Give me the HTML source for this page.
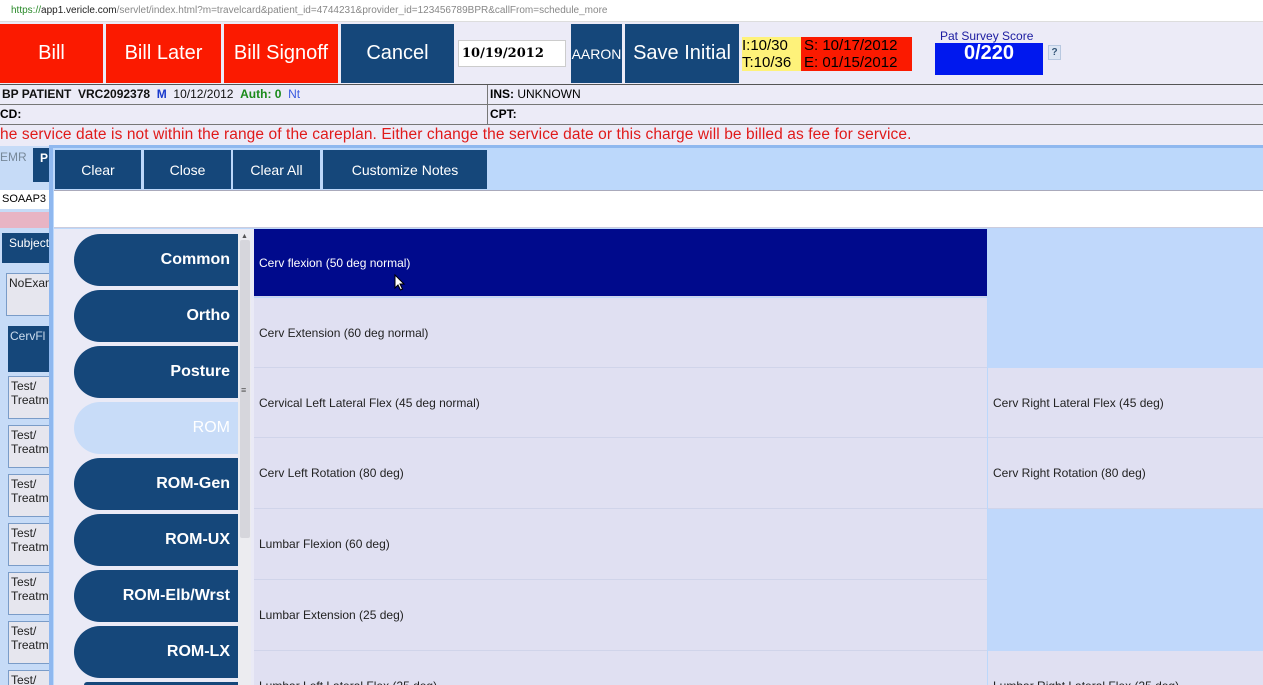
<!DOCTYPE html>
<html style="width:1263px;height:685px;overflow:hidden"><head><meta charset="utf-8"><style>
*{margin:0;padding:0;box-sizing:border-box}
body{width:1263px;height:685px;overflow:hidden;background:#ecebf7;font-family:"Liberation Sans",Arial,sans-serif;position:relative}
.a{position:absolute}
.btn{position:absolute;top:24px;height:59px;color:#fff;font-size:20px;display:flex;align-items:center;justify-content:center}
.red{background:#fb1a00}
.nav{background:#15477a}
.tb{position:absolute;top:150px;height:39px;background:#15477a;color:#fff;font-size:14px;display:flex;align-items:center;justify-content:center}
.pill{position:absolute;left:74px;width:164px;height:52px;background:#15477a;color:#fff;border-radius:26px 0 0 26px;font-size:16px;font-weight:bold;display:flex;align-items:center;justify-content:flex-end;padding-right:8px}
.cell{position:absolute;font-size:12px;color:#222;display:flex;align-items:center;padding-left:5px;background:#e0e0f2;border-bottom:1px solid #d0d4ea;overflow:hidden}
.lb{position:absolute;background:#e6e6ee;border:1px solid #7a9cc8;font-size:12px;color:#222;line-height:14px;padding:2px;overflow:hidden;white-space:nowrap}
.ln{position:absolute;left:0;width:1263px;height:1px;background:#555}
</style></head><body>
<div class="a" style="left:0;top:0;width:1263px;height:22px;background:#fff;border-bottom:1px solid #ddd;font-size:10px;line-height:22px;padding-left:11px;color:#888"><span style="color:#2a8a2a">https://</span><span style="color:#222">app1.vericle.com</span>/servlet/index.html?m=travelcard&amp;patient_id=4744231&amp;provider_id=123456789BPR&amp;callFrom=schedule_more</div>
<div class="btn red" style="left:0;width:103px">Bill</div>
<div class="btn red" style="left:106px;width:115px">Bill Later</div>
<div class="btn red" style="left:224px;width:114px">Bill Signoff</div>
<div class="btn nav" style="left:341px;width:113px">Cancel</div>
<div class="a" style="left:458px;top:40px;width:108px;height:27px;background:#fff;border:1px solid #ccc;font-family:'DejaVu Serif',serif;font-weight:bold;font-size:13px;line-height:25px;padding-left:3px">10/19/2012</div>
<div class="btn nav" style="left:571px;width:51px;font-size:14px">AARON</div>
<div class="btn nav" style="left:625px;width:114px">Save Initial</div>
<div class="a" style="left:742px;top:37px;width:59px;height:34px;background:#fef27a;font-size:15px;line-height:17px">I:10/30<br>T:10/36</div>
<div class="a" style="left:801px;top:37px;width:111px;height:34px;background:#fb1a00;font-size:15px;line-height:17px;padding-left:3px">S: 10/17/2012<br>E: 01/15/2012</div>
<div class="a" style="left:940px;top:30px;font-size:12px;line-height:13px;color:#1a1aa0">Pat Survey Score</div>
<div class="a" style="left:935px;top:43px;width:108px;height:32px;background:#0018ee;color:#fff;font-weight:bold;font-size:20px;text-align:center;line-height:20px">0/220</div>
<div class="a" style="left:1048px;top:45px;width:13px;height:15px;background:#dde6f4;border:1px solid #b8c8e0;font-size:10px;color:#357;text-align:center;line-height:13px;font-weight:bold">?</div>
<div class="ln" style="top:84px"></div>
<div class="a" style="left:2px;top:87px;font-size:12px;font-weight:bold;color:#111">BP PATIENT &nbsp;VRC2092378 &nbsp;<span style="color:#1a3acc">M</span> &nbsp;<span style="font-weight:normal">10/12/2012</span> &nbsp;<span style="color:#1a8a1a">Auth: 0</span> &nbsp;<span style="color:#3a5ae0;font-weight:normal">Nt</span></div>
<div class="a" style="left:490px;top:87px;font-size:12px"><b>INS:</b> UNKNOWN</div>
<div class="a" style="left:487px;top:85px;width:1px;height:40px;background:#777"></div>
<div class="ln" style="top:104px;background:#777"></div>
<div class="a" style="left:0;top:107px;font-size:12px;font-weight:bold">CD:</div>
<div class="a" style="left:490px;top:107px;font-size:12px;font-weight:bold">CPT:</div>
<div class="ln" style="top:124px;background:#777"></div>
<div class="a" style="left:0;top:126px;font-size:15.5px;color:#e01a1a;white-space:nowrap;letter-spacing:0.1px">he service date is not within the range of the careplan. Either change the service date or this charge will be billed as fee for service.</div>
<div class="a" style="left:0;top:146px;width:50px;height:539px;background:#c6dbf7"></div>
<div class="a" style="left:0;top:150px;font-size:12px;color:#789">EMR</div>
<div class="a" style="left:33px;top:148px;width:17px;height:34px;background:#15477a;color:#fff;font-weight:bold;font-size:12px;padding:3px 0 0 7px">P</div>
<div class="a" style="left:0;top:190px;width:50px;height:19px;background:#fff;font-size:11px;line-height:19px;padding-left:2px">SOAAP3</div>
<div class="a" style="left:0;top:212px;width:50px;height:16px;background:#e8b4c4"></div>
<div class="a" style="left:2px;top:233px;width:48px;height:30px;background:#15477a;color:#fff;font-size:12px;padding:3px 0 0 7px;overflow:hidden">Subject</div>
<div class="lb" style="left:6px;top:273px;width:46px;height:43px">NoExam</div>
<div class="a" style="left:8px;top:326px;width:42px;height:46px;background:#15477a;color:#cde;font-size:12px;padding:3px 2px">CervFl</div>
<div class="lb" style="left:8px;top:376px;width:44px;height:43px">Test/<br>Treatm</div>
<div class="lb" style="left:8px;top:425px;width:44px;height:43px">Test/<br>Treatm</div>
<div class="lb" style="left:8px;top:474px;width:44px;height:43px">Test/<br>Treatm</div>
<div class="lb" style="left:8px;top:523px;width:44px;height:43px">Test/<br>Treatm</div>
<div class="lb" style="left:8px;top:572px;width:44px;height:43px">Test/<br>Treatm</div>
<div class="lb" style="left:8px;top:621px;width:44px;height:43px">Test/<br>Treatm</div>
<div class="lb" style="left:8px;top:670px;width:44px;height:15px;border-bottom:0">Test/</div>
<div class="a" style="left:49px;top:145px;width:1214px;height:540px;background:#bcd8fb;border-left:4px solid #8fb8ef;border-top:3px solid #8fb8ef"></div>
<div class="tb" style="left:55px;width:86px">Clear</div>
<div class="tb" style="left:144px;width:87px">Close</div>
<div class="tb" style="left:233px;width:87px">Clear All</div>
<div class="tb" style="left:323px;width:164px">Customize Notes</div>
<div class="a" style="left:54px;top:190px;width:1209px;height:38px;background:#fff;border-top:1px solid #aab;border-bottom:1px solid #ccd"></div>
<div class="a" style="left:54px;top:229px;width:200px;height:456px;background:#eaeaf6"></div>
<div class="pill" style="top:234px">Common</div>
<div class="pill" style="top:290px">Ortho</div>
<div class="pill" style="top:346px">Posture</div>
<div class="pill" style="top:402px;background:#c8dcf8;color:#fff;font-weight:normal">ROM</div>
<div class="pill" style="top:458px">ROM-Gen</div>
<div class="pill" style="top:514px">ROM-UX</div>
<div class="pill" style="top:570px">ROM-Elb/Wrst</div>
<div class="pill" style="top:626px">ROM-LX</div>
<div class="a" style="left:84px;top:682px;width:154px;height:3px;background:#15477a;border-radius:8px 0 0 0"></div>
<div class="a" style="left:238px;top:230px;width:13px;height:455px;background:#ececf0"></div>
<div class="a" style="left:240px;top:240px;width:10px;height:298px;background:#d6d6dc;border-radius:2px"></div>
<div class="a" style="left:241px;top:233px;font-size:7px;line-height:8px;color:#555">▲</div>
<div class="a" style="left:241px;top:385px;font-size:9px;line-height:10px;color:#555">≡</div>
<div class="cell" style="left:254px;top:229px;width:733px;height:68px;background:#000a8c;color:#fff">Cerv flexion (50 deg normal)</div>
<div class="cell" style="left:254px;top:298px;width:733px;height:70px">Cerv Extension (60 deg normal)</div>
<div class="cell" style="left:254px;top:368px;width:733px;height:70px">Cervical Left Lateral Flex (45 deg normal)</div>
<div class="cell" style="left:254px;top:438px;width:733px;height:71px">Cerv Left Rotation (80 deg)</div>
<div class="cell" style="left:254px;top:509px;width:733px;height:71px">Lumbar Flexion (60 deg)</div>
<div class="cell" style="left:254px;top:580px;width:733px;height:71px">Lumbar Extension (25 deg)</div>
<div class="cell" style="left:254px;top:651px;width:733px;height:34px;align-items:flex-start;padding-top:28px;border:0">Lumbar Left Lateral Flex (25 deg)</div>
<div class="cell" style="left:988px;top:229px;width:275px;height:139px;background:#c0d8fb;border:0"></div>
<div class="cell" style="left:988px;top:368px;width:275px;height:70px">Cerv Right Lateral Flex (45 deg)</div>
<div class="cell" style="left:988px;top:438px;width:275px;height:71px">Cerv Right Rotation (80 deg)</div>
<div class="cell" style="left:988px;top:509px;width:275px;height:142px;background:#c0d8fb;border:0"></div>
<div class="cell" style="left:988px;top:651px;width:275px;height:34px;align-items:flex-start;padding-top:28px;border:0">Lumbar Right Lateral Flex (25 deg)</div>
<svg class="a" style="left:394px;top:274px" width="12" height="18" viewBox="0 0 12 18"><path d="M1 1 L1 14 L4 11 L6.5 16 L8.5 15 L6 10 L10 10 Z" fill="#fff" stroke="#000" stroke-width="1"/></svg>
</body></html>
